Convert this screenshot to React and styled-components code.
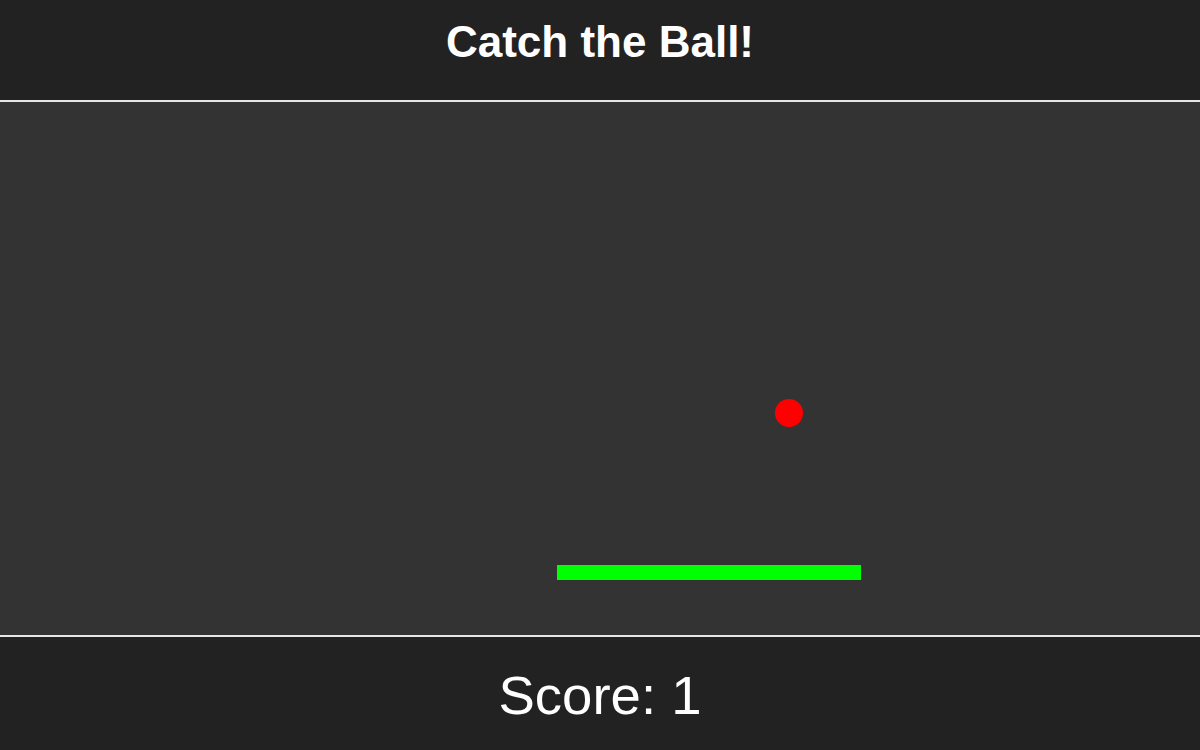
import React from 'react';
import styled, { createGlobalStyle } from 'styled-components';

const GlobalStyle = createGlobalStyle`
  html, body {
    margin: 0;
    padding: 0;
    height: 100%;
    background: #222222;
    font-family: "Liberation Sans", Arial, sans-serif;
    color: #ffffff;
  }
  #root {
    height: 100%;
  }
`;

const Page = styled.div`
  display: flex;
  flex-direction: column;
  height: 750px;
  overflow: hidden;
`;

const Header = styled.header`
  height: 102px;
  box-sizing: border-box;
  padding-bottom: 16px;
  display: flex;
  align-items: center;
  justify-content: center;
  background: #222222;
  border-bottom: 2px solid #e6e6e6;
`;

const Title = styled.h1`
  margin: 0;
  font-size: 44px;
  font-weight: 700;
  color: #ffffff;
`;

const GameArea = styled.main`
  position: relative;
  height: 533px;
  background: #333333;
`;

const Ball = styled.div`
  position: absolute;
  left: ${p => p.x}px;
  top: ${p => p.y}px;
  width: ${p => p.size}px;
  height: ${p => p.size}px;
  border-radius: 50%;
  background: #ff0000;
`;

const Paddle = styled.div`
  position: absolute;
  left: ${p => p.x}px;
  top: ${p => p.y}px;
  width: ${p => p.w}px;
  height: 15px;
  background: #00ff00;
`;

const Footer = styled.footer`
  flex: 1;
  display: flex;
  align-items: center;
  justify-content: center;
  padding-top: 4px;
  background: #222222;
  border-top: 2px solid #e6e6e6;
`;

const Score = styled.div`
  font-size: 54.5px;
  color: #ffffff;
`;

export default function App() {
  const score = 1;
  return (
    <>
      <GlobalStyle />
      <Page>
        <Header>
          <Title>Catch the Ball!</Title>
        </Header>
        <GameArea>
          <Ball x={775} y={297} size={28} />
          <Paddle x={557} y={463} w={304} />
        </GameArea>
        <Footer>
          <Score>Score: {score}</Score>
        </Footer>
      </Page>
    </>
  );
}
